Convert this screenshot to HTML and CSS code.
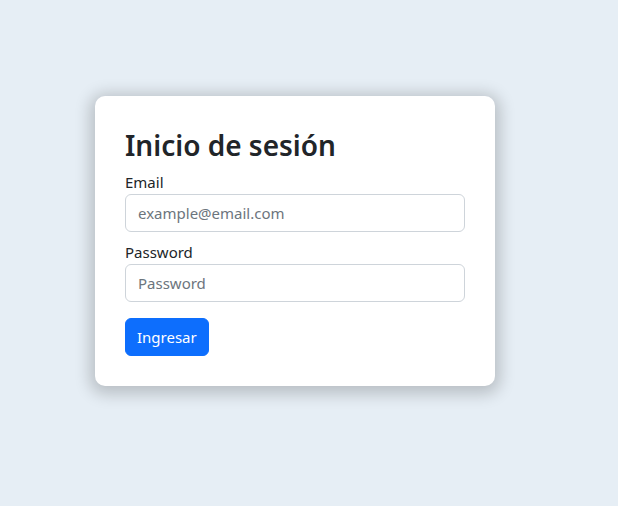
FILE: index.html
```html
<!DOCTYPE html>
<html lang="es">

<head>
    <meta charset="UTF-8">
    <meta name="viewport" content="width=device-width, initial-scale=1.0">
    <title>Inicio de sesión</title>
    <link rel="stylesheet" href="styles.css">
</head>

<body>
    <main class="page">
        <form class="login-card" action="" onsubmit="event.preventDefault()">
            <h1 class="login-title">Inicio de sesión</h1>

            <div class="field">
                <label for="email">Email</label>
                <input type="email" id="email" name="email" placeholder="example@email.com">
            </div>

            <div class="field">
                <label for="password">Password</label>
                <input type="password" id="password" name="password" placeholder="Password">
            </div>

            <button type="submit" class="btn-primary">Ingresar</button>
        </form>
    </main>
</body>

</html>
```

FILE: styles.css
```css
* {
    box-sizing: border-box;
}

body {
    margin: 0;
    min-height: 100vh;
    background-color: #e6eef5;
    font-family: "Noto Sans", "Open Sans", sans-serif;
    color: #212529;
}

.page {
    padding: 96px 0 0 95px;
}

.login-card {
    width: 400px;
    padding: 30px;
    background: #fff;
    border-radius: 10px;
    box-shadow: 0 3px 16px 5px rgba(0, 0, 0, 0.2);
}

.login-title {
    margin: 0 0 6px;
    font-size: 28px;
    font-weight: 600;
    line-height: 38px;
}

.field {
    display: flex;
    flex-direction: column;
    margin-bottom: 8px;
}

.field:last-of-type {
    margin-bottom: 16px;
}

label {
    font-size: 15px;
    line-height: 24px;
}

input {
    height: 38px;
    padding: 6px 12px;
    font-family: inherit;
    font-size: 15px;
    color: #212529;
    border: 1px solid #ced4da;
    border-radius: 6px;
}

input::placeholder {
    color: #6c757d;
}

.btn-primary {
    height: 38px;
    padding: 6px 11px;
    font-family: inherit;
    font-size: 15px;
    color: #fff;
    background-color: #0d6efd;
    border: 1px solid #0d6efd;
    border-radius: 6px;
    cursor: pointer;
}
```
